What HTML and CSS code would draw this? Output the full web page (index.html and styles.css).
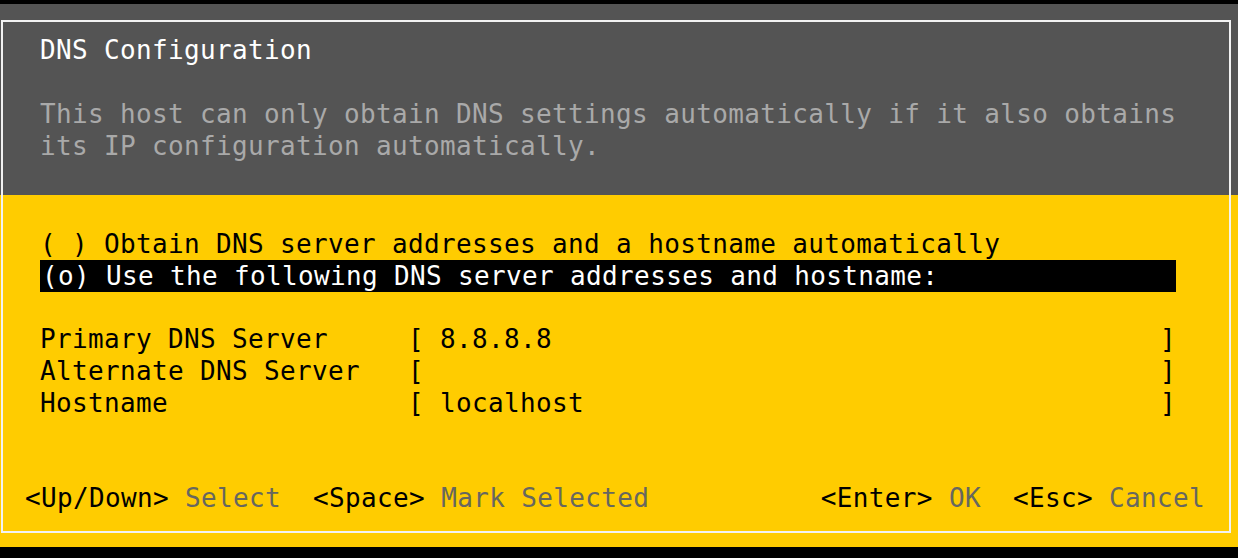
FILE: index.html
```html
<!DOCTYPE html>
<html lang="en">
<head>
    <meta charset="UTF-8">
    <title>DNS Configuration</title>
    <link rel="stylesheet" href="styles.css">
</head>
<body>
    <div class="screen">
        <div class="dialog">
            <div class="dialog-head">
                <h1 class="title">DNS Configuration</h1>
                <p class="info">This host can only obtain DNS settings automatically if it also obtains
its IP configuration automatically.</p>
            </div>

            <div class="dialog-body">
                <div class="options">
                    <div class="option">( ) Obtain DNS server addresses and a hostname automatically</div>
                    <div class="option selected">(o) Use the following DNS server addresses and hostname:</div>
                </div>

                <div class="fields">
                    <div class="field">
                        <span class="field-label">Primary DNS Server</span>
                        <span class="field-input"><span>[ 8.8.8.8</span><span>]</span></span>
                    </div>
                    <div class="field">
                        <span class="field-label">Alternate DNS Server</span>
                        <span class="field-input"><span>[</span><span>]</span></span>
                    </div>
                    <div class="field">
                        <span class="field-label">Hostname</span>
                        <span class="field-input"><span>[ localhost</span><span>]</span></span>
                    </div>
                </div>

                <div class="keys">
                    <div class="key-group"><span class="key">&lt;Up/Down&gt;</span> <span class="action">Select</span>  <span class="key">&lt;Space&gt;</span> <span class="action">Mark Selected</span></div>
                    <div class="key-group"><span class="key">&lt;Enter&gt;</span> <span class="action">OK</span>  <span class="key">&lt;Esc&gt;</span> <span class="action">Cancel</span></div>
                </div>
            </div>
        </div>
    </div>
</body>
</html>
```

FILE: styles.css
```css
* {
    margin: 0;
    padding: 0;
    box-sizing: border-box;
}

body {
    background-color: #000;
    font-family: 'DejaVu Sans Mono', 'Liberation Mono', monospace;
    font-size: 26px;
    line-height: 32px;
    letter-spacing: 0.35px;
    overflow: hidden;
}

.screen {
    margin-top: 4px;
    height: 543px;
    padding: 16px 7px 14px 1px;
    background: linear-gradient(#545454 0, #545454 191px, #ffcc00 191px);
}

.dialog {
    height: 513px;
    border: 2px solid #f2f2f2;
    display: flex;
    flex-direction: column;
}

.dialog-head {
    height: 173px;
    padding: 12px 37px 0;
    background-color: #545454;
}

.title {
    font-size: 26px;
    font-weight: normal;
    color: #fff;
    margin-bottom: 32px;
}

.info {
    color: #a9a9a9;
    white-space: pre;
}

.dialog-body {
    flex: 1;
    background-color: #ffcc00;
    color: #000;
    padding: 33px 0 17px;
    display: flex;
    flex-direction: column;
}

.options,
.fields {
    margin: 0 37px;
    width: 1136px;
}

.option {
    white-space: pre;
}

.option.selected {
    background-color: #000;
    color: #fff;
    padding-left: 2px;
}

.fields {
    margin-top: 31px;
}

.field {
    display: flex;
}

.field-label {
    width: 368px;
    flex-shrink: 0;
}

.field-input {
    flex: 1;
    display: flex;
    justify-content: space-between;
}

.keys {
    margin-top: auto;
    padding: 0 24px 0 22px;
    display: flex;
    justify-content: space-between;
}

.key-group {
    white-space: pre;
}

.key {
    color: #000;
}

.action {
    color: #67675f;
}
```
